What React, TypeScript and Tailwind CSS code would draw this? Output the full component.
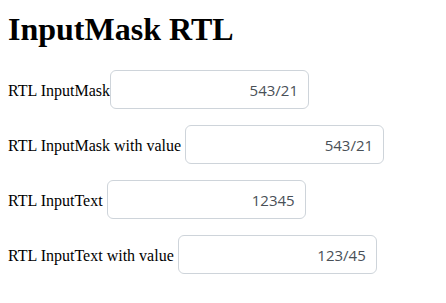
import { useState } from "react";

type Row = {
  label: string;
  initial: string;
  gap: boolean;
};

const rows: Row[] = [
  { label: "RTL InputMask", initial: "543/21", gap: false },
  { label: "RTL InputMask with value", initial: "543/21", gap: true },
  { label: "RTL InputText", initial: "12345", gap: true },
  { label: "RTL InputText with value", initial: "123/45", gap: true },
];

function RtlField({ row }: { row: Row }) {
  const [value, setValue] = useState(row.initial);
  return (
    <div className="mb-4 leading-[18px]">
      {row.label}
      {row.gap ? " " : null}
      <input
        type="text"
        value={value}
        onChange={(e) => setValue(e.target.value)}
        className="inline-block h-[39px] w-[199px] rounded-[6px] border border-[#ced4da] bg-white pr-[10px] pl-[11px] text-right align-baseline font-['Open_Sans',sans-serif] text-[15px] text-[#495057] outline-none"
      />
    </div>
  );
}

export default function App() {
  return (
    <div className="bg-white px-2 pt-[11px] font-['Liberation_Serif',serif] text-[16px] text-black">
      <h1 className="mb-[23px] text-[32px] leading-[36px] font-bold">
        InputMask RTL
      </h1>
      {rows.map((r) => (
        <RtlField key={r.label} row={r} />
      ))}
    </div>
  );
}
